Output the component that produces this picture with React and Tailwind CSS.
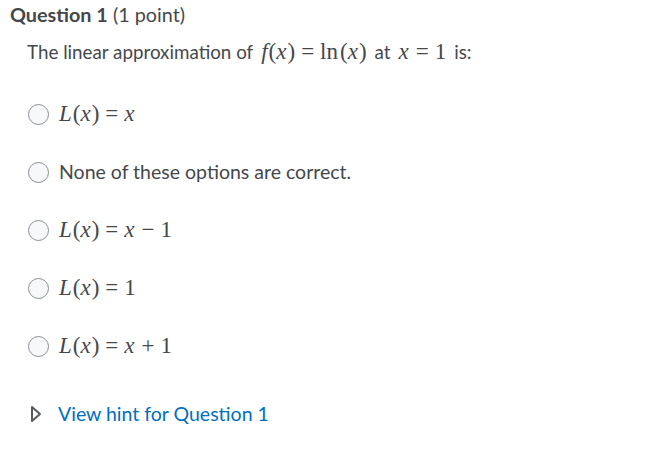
import React from "react";

const M = ({ children, className = "" }) => (
  <span className={`font-['Liberation_Serif',serif] text-[23px] ${className}`}>{children}</span>
);
const I = ({ children }) => <i className="mr-[1px]">{children}</i>;
const Op = ({ children }) => <span className="mx-[6px]">{children}</span>;

const options = [
  <M key="a"><I>L</I>(<I>x</I>)<Op>=</Op><I>x</I></M>,
  <span key="b">None of these options are correct.</span>,
  <M key="c"><I>L</I>(<I>x</I>)<Op>=</Op><I>x</I><Op>−</Op>1</M>,
  <M key="d"><I>L</I>(<I>x</I>)<Op>=</Op>1</M>,
  <M key="e"><I>L</I>(<I>x</I>)<Op>=</Op><I>x</I><Op>+</Op>1</M>,
];

export default function App() {
  return (
    <div className="w-[645px] h-[456px] bg-white text-[#45484a] font-['Lato',sans-serif] text-[19.5px]">
      <div className="pl-[10px] pt-0 leading-[28px] text-[19.8px]">
        <span className="font-bold">Question 1</span> (1 point)
      </div>
      <div className="pl-[27px] pt-[10px] leading-[28px] text-[18.8px]">
        The linear approximation of
        <M className="mx-[8px]"><I>f</I>(<I>x</I>)<Op>=</Op>ln<span className="ml-[2px]">(</span><I>x</I>)</M>at
        <M className="mx-[8px]"><I>x</I><Op>=</Op>1</M>is:
      </div>
      <div className="flex flex-col gap-[30px] pl-[28px] pt-[34px]">
        {options.map((opt, i) => (
          <label key={i} className="flex items-center gap-[10px] h-[28px]">
            <span className="w-[21px] h-[21px] rounded-full border border-[#8a8f94] bg-[#f7f8fa] shrink-0" />
            <span className="leading-[28px]">{opt}</span>
          </label>
        ))}
      </div>
      <div className="flex items-center gap-[16px] pl-[30px] pt-[40px] h-[28px] box-content">
        <svg width="12" height="18" viewBox="0 0 12 18">
          <path d="M2 2 L10 9 L2 16 Z" fill="none" stroke="#565a5c" strokeWidth="2" strokeLinejoin="round" />
        </svg>
        <span className="text-[#006fbf] leading-[28px]">View hint for Question 1</span>
      </div>
    </div>
  );
}
